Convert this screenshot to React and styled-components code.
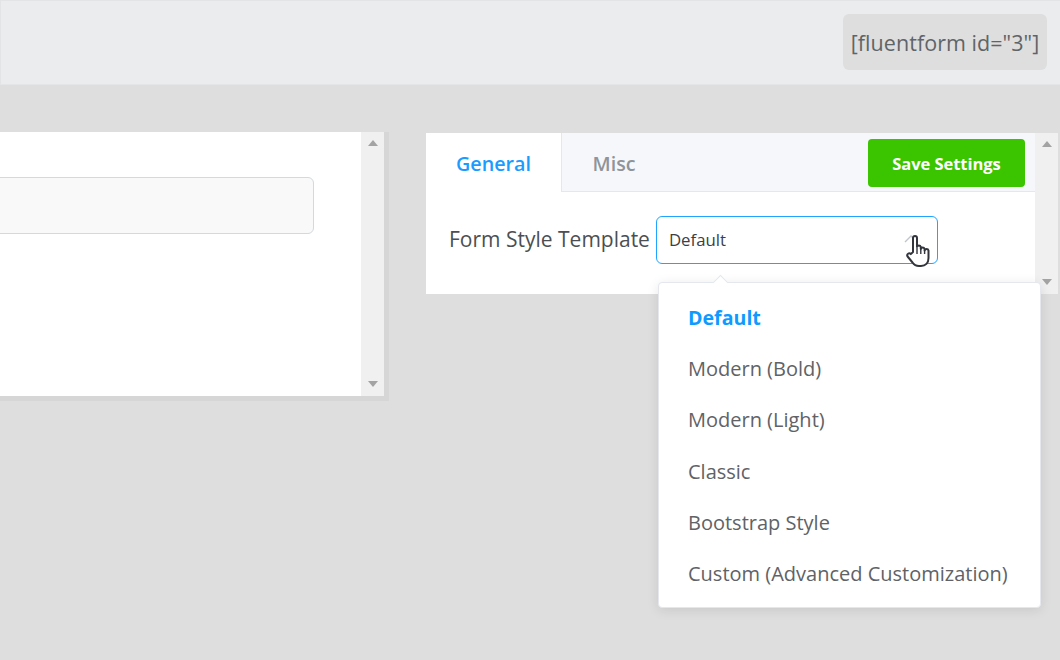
import React from "react";
import styled, { createGlobalStyle } from "styled-components";

const GlobalStyle = createGlobalStyle`
  html, body {
    margin: 0;
    padding: 0;
    background: #dedede;
  }
  body {
    font-family: "Open Sans", "Noto Sans", "Liberation Sans", sans-serif;
  }
`;

const Page = styled.div`
  width: 1060px;
  height: 660px;
  overflow: hidden;
  background: #dedede;
  display: flex;
  flex-direction: column;
`;

const Header = styled.header`
  height: 85px;
  flex: none;
  box-sizing: border-box;
  background: #eaecee;
  border-top: 1px solid #e2e4e6;
  border-left: 1px solid #e2e4e6;
  border-bottom: 1px solid #e3e5e6;
  display: flex;
  justify-content: flex-end;
  align-items: flex-start;
  padding: 13px 13px 0 0;
`;

const ShortCode = styled.div`
  width: 204px;
  height: 56px;
  background: #dedede;
  border-radius: 6px;
  color: #5f6468;
  font-size: 21.5px;
  letter-spacing: 0.05px;
  display: flex;
  align-items: center;
  justify-content: center;
`;

const Main = styled.main`
  flex: 1;
  display: flex;
  align-items: flex-start;
  gap: 37px;
  padding-top: 47px;
`;

const LeftPanel = styled.section`
  width: 384px;
  height: 264px;
  flex: none;
  display: flex;
  background: #fff;
  border-right: 5px solid #d6d6d6;
  border-bottom: 5px solid #d6d6d6;
`;

const LeftBody = styled.div`
  flex: 1;
  min-width: 0;
  padding: 45px 47px 0 0;
`;

const EmptyInput = styled.div`
  height: 55px;
  margin-left: -10px;
  background: #f9f9f9;
  border: 1px solid #d2d9df;
  border-radius: 6px;
`;

const Scrollbar = styled.div`
  width: 23px;
  flex: none;
  background: #f0f0f0;
  display: flex;
  flex-direction: column;
  align-items: center;
  justify-content: space-between;
  padding: 8px 0 9px;
  box-sizing: border-box;
`;

const Arrow = styled.span`
  width: 0;
  height: 0;
  border-left: 5.5px solid transparent;
  border-right: 5.5px solid transparent;
  ${(p) =>
    p.$down
      ? "border-top: 6px solid #a3a3a3;"
      : "border-bottom: 6px solid #a3a3a3;"}
`;

const RightColumn = styled.div`
  position: relative;
  width: 632px;
  flex: none;
`;

const RightPanel = styled.section`
  height: 161px;
  margin-top: 1px;
  display: flex;
  background: #fff;
`;

const RightBody = styled.div`
  flex: 1;
  min-width: 0;
  display: flex;
  flex-direction: column;
`;

const Tabs = styled.div`
  height: 58px;
  flex: none;
  display: flex;
  background: #f5f7fa;
  border-bottom: 1px solid #e4e7ed;
`;

const Tab = styled.div`
  height: ${(p) => (p.$active ? "59px" : "58px")};
  width: ${(p) => (p.$active ? "136px" : "104px")};
  box-sizing: border-box;
  padding-top: 2px;
  background: ${(p) => (p.$active ? "#fff" : "transparent")};
  border-right: ${(p) => (p.$active ? "1px solid #e4e7ed" : "0")};
  color: ${(p) => (p.$active ? "#1a9cff" : "#909399")};
  font-size: 19.7px;
  font-weight: 600;
  display: flex;
  align-items: center;
  justify-content: center;
`;

const SaveButton = styled.button`
  width: 157px;
  height: 48px;
  margin: 6px 10px 0 auto;
  border: 0;
  border-radius: 4px;
  background: #3bc500;
  color: #fff;
  font-family: inherit;
  font-size: 16.5px;
  font-weight: 700;
  letter-spacing: -0.05px;
  padding: 0;
`;

const Field = styled.div`
  display: flex;
  align-items: center;
  gap: 6px;
  padding: 24px 0 0 23px;
`;

const FieldLabel = styled.label`
  color: #4b4f53;
  font-size: 21px;
  white-space: nowrap;
  padding-bottom: 2px;
`;

const SelectBox = styled.div`
  position: relative;
  width: 282px;
  height: 48px;
  box-sizing: border-box;
  border: 1.5px solid #1fa5ff;
  border-radius: 6px;
  color: #3c3f43;
  font-size: 16.8px;
  display: flex;
  align-items: center;
  padding: 0 0 2px 12px;
`;

const Caret = styled.svg`
  position: absolute;
  left: 247px;
  top: 17px;
`;

const HandCursor = styled.svg`
  position: absolute;
  left: 249px;
  top: 17px;
`;

const Dropdown = styled.div`
  position: absolute;
  left: 232px;
  top: 150px;
  width: 383px;
  height: 326px;
  box-sizing: border-box;
  background: #fff;
  border: 1px solid #e4e7ed;
  border-radius: 4px;
  box-shadow: 0 2px 12px rgba(0, 0, 0, 0.1);
  padding: 9px 0;
  display: flex;
  flex-direction: column;

  &::before {
    content: "";
    position: absolute;
    left: 56px;
    top: -6px;
    width: 10px;
    height: 10px;
    background: #fff;
    border-left: 1px solid #e4e7ed;
    border-top: 1px solid #e4e7ed;
    transform: rotate(45deg);
  }
`;

const Option = styled.div`
  height: 51.2px;
  flex: none;
  padding-left: 29px;
  display: flex;
  align-items: center;
  white-space: nowrap;
  color: ${(p) => (p.$selected ? "#0d9bff" : "#606266")};
  font-size: ${(p) => (p.$selected ? "19.6px" : "20px")};
  font-weight: ${(p) => (p.$selected ? 700 : 400)};
`;

const options = [
  "Default",
  "Modern (Bold)",
  "Modern (Light)",
  "Classic",
  "Bootstrap Style",
  "Custom (Advanced Customization)",
];

const App = () => {
  return (
    <Page>
      <GlobalStyle />
      <Header>
        <ShortCode>[fluentform id="3"]</ShortCode>
      </Header>
      <Main>
        <LeftPanel>
          <LeftBody>
            <EmptyInput />
          </LeftBody>
          <Scrollbar>
            <Arrow />
            <Arrow $down />
          </Scrollbar>
        </LeftPanel>
        <RightColumn>
          <RightPanel>
            <RightBody>
              <Tabs>
                <Tab $active>General</Tab>
                <Tab>Misc</Tab>
                <SaveButton>Save Settings</SaveButton>
              </Tabs>
              <Field>
                <FieldLabel>Form Style Template</FieldLabel>
                <SelectBox>
                  Default
                  <Caret width="14" height="9" viewBox="0 0 14 9">
                    <path d="M1 8 L7 2 L13 8" fill="none" stroke="#c0c4cc" strokeWidth="1.4" />
                  </Caret>
                  <HandCursor width="26" height="34" viewBox="0 0 26 34">
                    <path
                      d="M7 18 V4 a2 2 0 0 1 4 0 V13 a2 2 0 0 1 3.8 0 V15 a2 2 0 0 1 3.8 0 V16.5 a2 2 0 0 1 3.9 0 V24 c0 5 -3 8 -7.5 8 h-2 c-3 0 -5 -1.2 -6.5 -3.5 L1.6 22.5 c-1.4 -2.4 1.6 -4.2 3.2 -2.4 Z"
                      fill="#fff"
                      stroke="#32363c"
                      strokeWidth="2"
                      strokeLinejoin="round"
                    />
                    <path d="M11 14 V20 M14.8 15 V20 M18.6 16 V20" stroke="#32363c" strokeWidth="1.4" />
                  </HandCursor>
                </SelectBox>
              </Field>
            </RightBody>
            <Scrollbar>
              <Arrow />
              <Arrow $down />
            </Scrollbar>
          </RightPanel>
          <Dropdown>
            {options.map((option, i) => (
              <Option key={option} $selected={i === 0}>
                {option}
              </Option>
            ))}
          </Dropdown>
        </RightColumn>
      </Main>
    </Page>
  );
};

export default App;
